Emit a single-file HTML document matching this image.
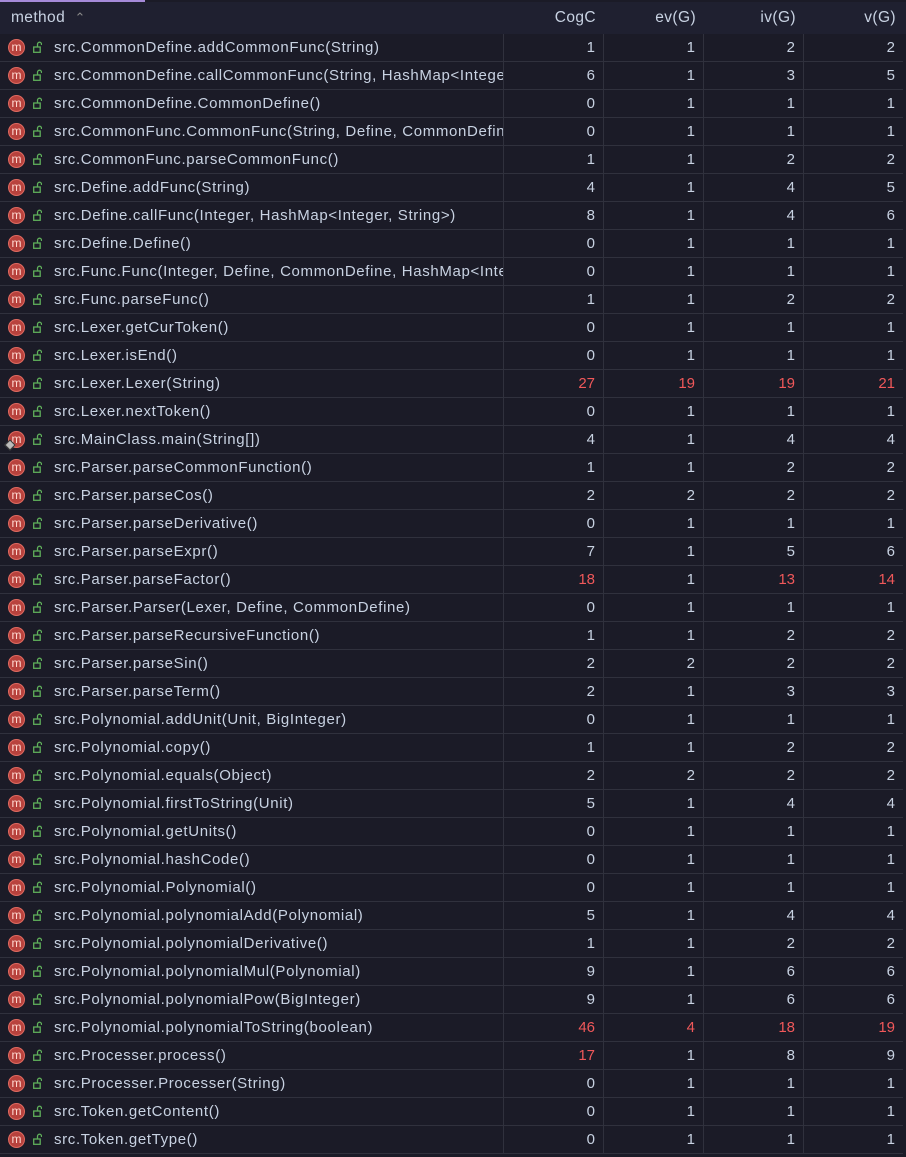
<!DOCTYPE html><html><head><style>
body{margin:0;background:#1b1b27;width:906px;height:1157px;overflow:hidden;font-family:"Liberation Sans",sans-serif;font-size:15px;color:#c8d2e2;position:relative}
.top{position:absolute;left:0;top:0;width:145px;height:2px;background:#a58ad8}
.hdr{position:absolute;left:0;top:2px;width:906px;height:32px;background:#1f2030;font-size:15.5px}
.hdr div{position:absolute;top:0;height:100%;line-height:32px;letter-spacing:0.4px}
.row{position:absolute;left:0;width:903px;height:27px;border-bottom:1px solid #30313d}
.c{position:absolute;top:0;height:27px;line-height:28px;white-space:nowrap;overflow:hidden}
.n{border-left:1px solid #30313d;text-align:right;width:91px;padding-right:8px}
.red{color:#f0585a}
.ic{position:absolute;left:8px;top:5px;width:15px;height:15px;border-radius:50%;background:#b8423d;border:1px solid #e06a60;color:#ffd8d0;font-size:12px;line-height:14px;text-align:center}
.lk{position:absolute;left:33px;top:7px;width:9px;height:12px}
.t{left:54px;width:449px;letter-spacing:0.65px}
</style></head><body>
<div class="top"></div>
<div class="hdr">
<div style="left:11px">method &nbsp;<span style="color:#888;font-size:13px">⌃</span></div>
<div style="right:310px">CogC</div><div style="right:210px">ev(G)</div><div style="right:110px">iv(G)</div><div style="right:10px">v(G)</div>
</div>
<div id="tb"></div>
<script>
const d=`src.CommonDefine.addCommonFunc(String)|1|1|2|2
src.CommonDefine.callCommonFunc(String, HashMap<Integer, String>)|6|1|3|5
src.CommonDefine.CommonDefine()|0|1|1|1
src.CommonFunc.CommonFunc(String, Define, CommonDefine, HashMap)|0|1|1|1
src.CommonFunc.parseCommonFunc()|1|1|2|2
src.Define.addFunc(String)|4|1|4|5
src.Define.callFunc(Integer, HashMap<Integer, String>)|8|1|4|6
src.Define.Define()|0|1|1|1
src.Func.Func(Integer, Define, CommonDefine, HashMap<Integer, String>)|0|1|1|1
src.Func.parseFunc()|1|1|2|2
src.Lexer.getCurToken()|0|1|1|1
src.Lexer.isEnd()|0|1|1|1
src.Lexer.Lexer(String)|27r|19r|19r|21r
src.Lexer.nextToken()|0|1|1|1
src.MainClass.main(String[])|4|1|4|4
src.Parser.parseCommonFunction()|1|1|2|2
src.Parser.parseCos()|2|2|2|2
src.Parser.parseDerivative()|0|1|1|1
src.Parser.parseExpr()|7|1|5|6
src.Parser.parseFactor()|18r|1|13r|14r
src.Parser.Parser(Lexer, Define, CommonDefine)|0|1|1|1
src.Parser.parseRecursiveFunction()|1|1|2|2
src.Parser.parseSin()|2|2|2|2
src.Parser.parseTerm()|2|1|3|3
src.Polynomial.addUnit(Unit, BigInteger)|0|1|1|1
src.Polynomial.copy()|1|1|2|2
src.Polynomial.equals(Object)|2|2|2|2
src.Polynomial.firstToString(Unit)|5|1|4|4
src.Polynomial.getUnits()|0|1|1|1
src.Polynomial.hashCode()|0|1|1|1
src.Polynomial.Polynomial()|0|1|1|1
src.Polynomial.polynomialAdd(Polynomial)|5|1|4|4
src.Polynomial.polynomialDerivative()|1|1|2|2
src.Polynomial.polynomialMul(Polynomial)|9|1|6|6
src.Polynomial.polynomialPow(BigInteger)|9|1|6|6
src.Polynomial.polynomialToString(boolean)|46r|4r|18r|19r
src.Processer.process()|17r|1|8|9
src.Processer.Processer(String)|0|1|1|1
src.Token.getContent()|0|1|1|1
src.Token.getType()|0|1|1|1`;
const esc=s=>s.replace(/&/g,'&amp;').replace(/</g,'&lt;').replace(/>/g,'&gt;');
const lock='<svg class="lk" viewBox="0 0 9 12"><path d="M4.5 6V3.2a2 2 0 0 1 4 0V4" fill="none" stroke="#5fae5a" stroke-width="1.3"/><rect x="0.7" y="6" width="6.5" height="5.3" fill="none" stroke="#5fae5a" stroke-width="1.3"/></svg>';
let h='';
d.split('\n').forEach((l,i)=>{const p=l.split('|');
const extra=i==14?'<div style="position:absolute;left:6px;top:15px;width:6px;height:6px;background:#bbb;transform:rotate(45deg);border:1px solid #333"></div>':'';
h+='<div class="row" style="top:'+(34+i*28)+'px"><div class="ic">m</div>'+extra+lock+'<div class="c t">'+esc(p[0])+'</div>';
for(let k=1;k<5;k++){const r=p[k].endsWith('r');h+='<div class="c n'+(r?' red':'')+'" style="left:'+(403+k*100)+'px">'+p[k].replace('r','')+'</div>';}
h+='</div>';});
document.getElementById('tb').innerHTML=h;
</script>
</body></html>
